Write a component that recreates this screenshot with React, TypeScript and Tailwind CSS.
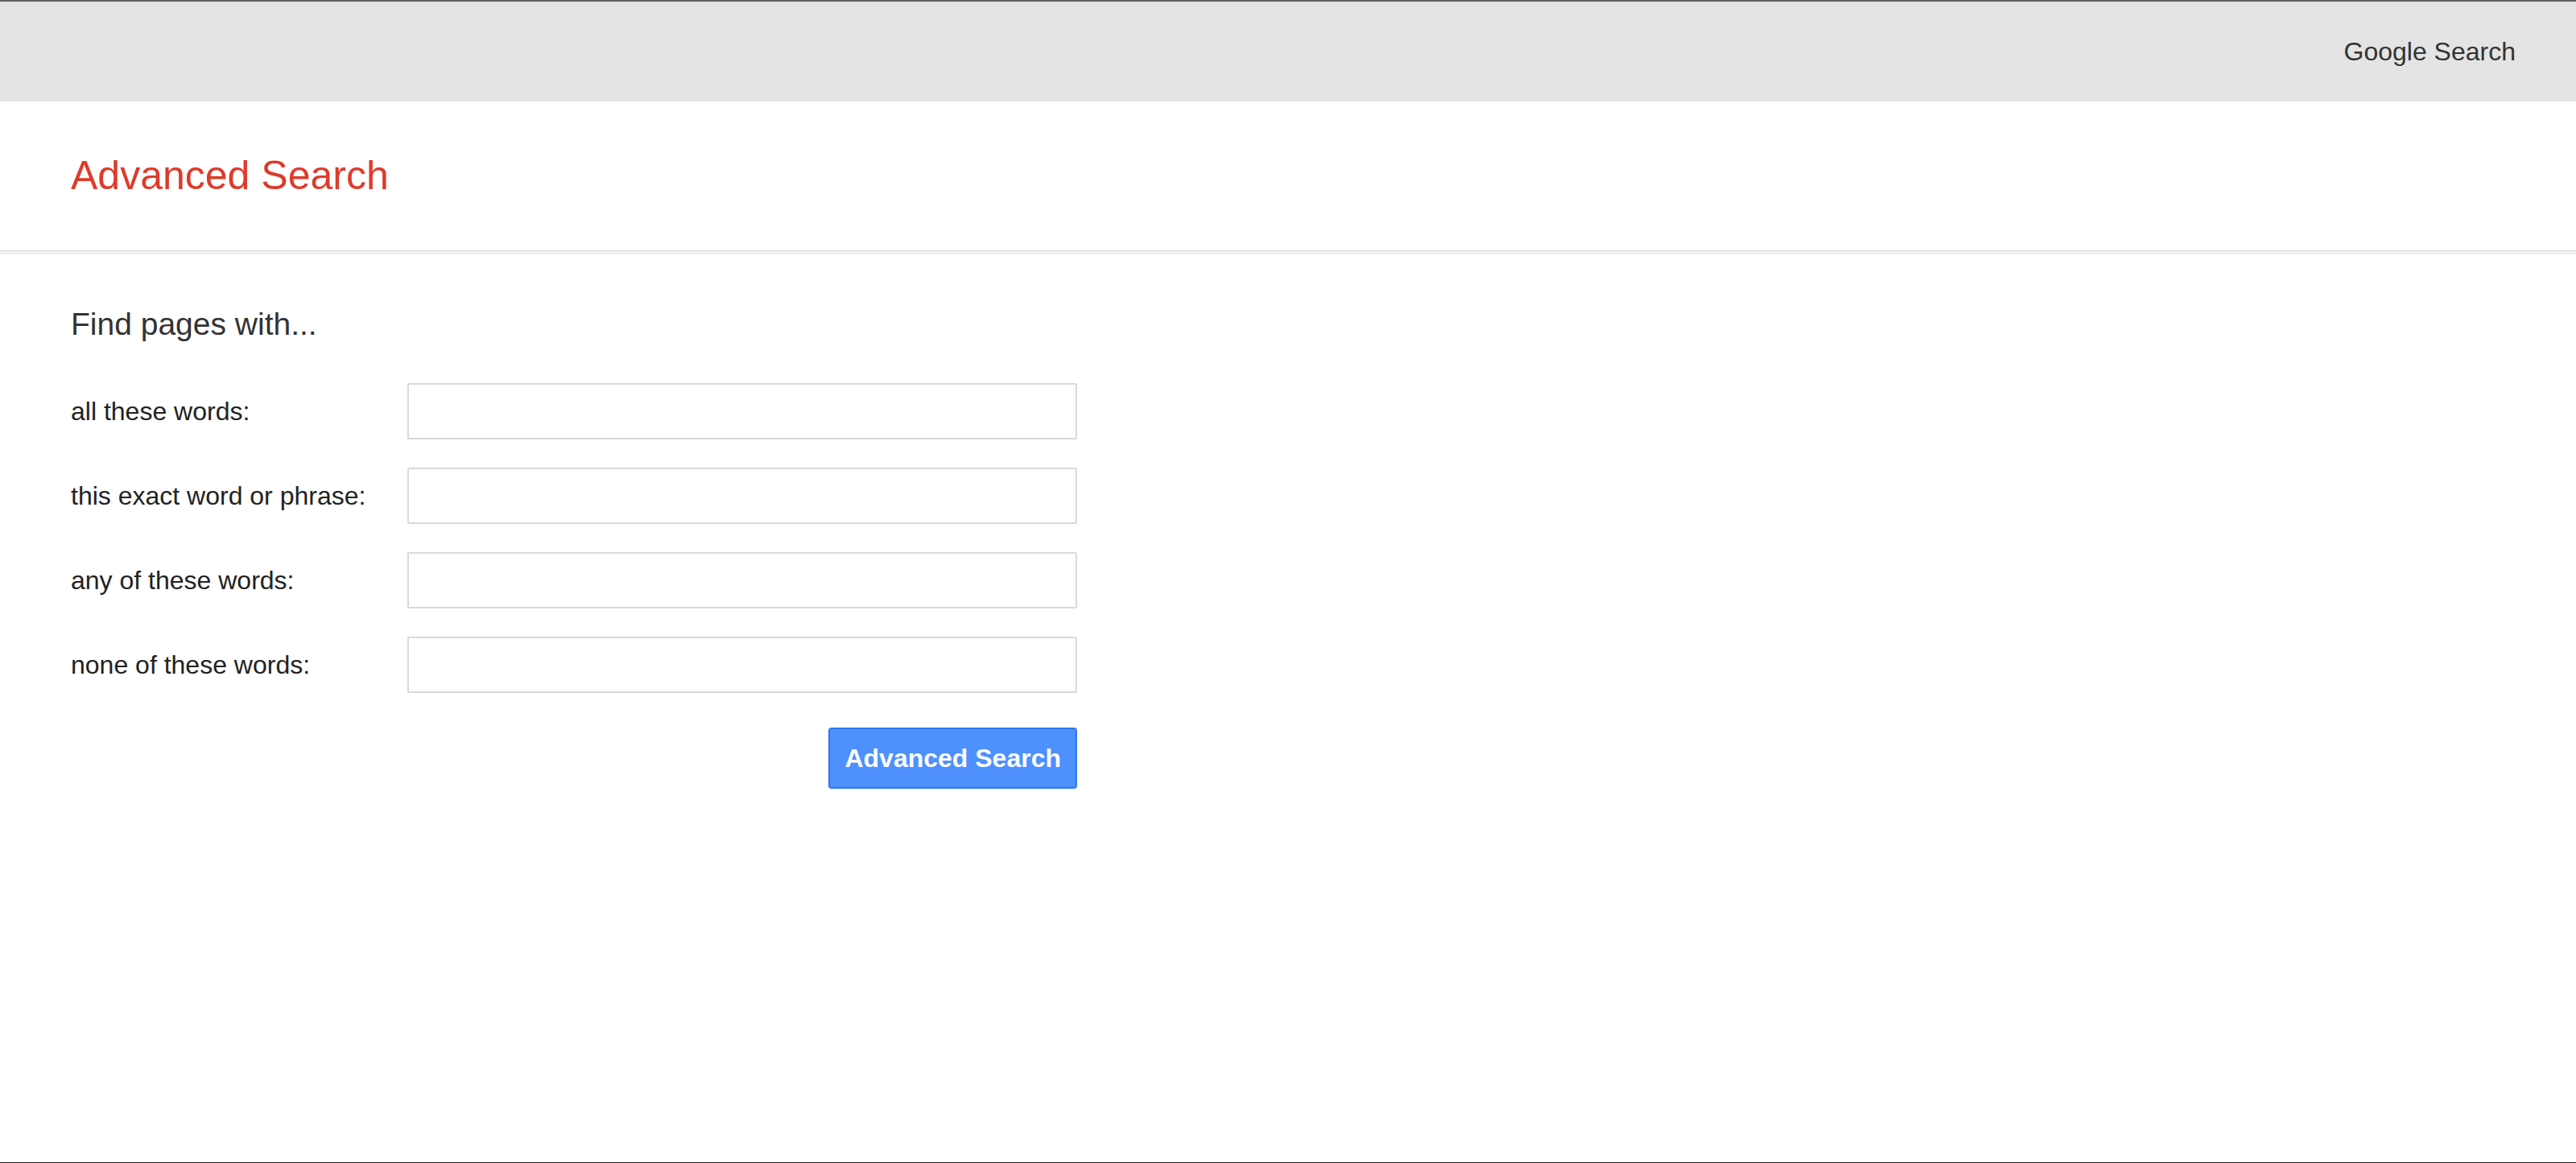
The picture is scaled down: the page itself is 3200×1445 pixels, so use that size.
const FIELDS = [
  'all these words:',
  'this exact word or phrase:',
  'any of these words:',
  'none of these words:',
];

export default function App() {
  return (
    <div className="flex h-[1445px] w-full flex-col bg-white font-['Liberation_Sans',Arial,sans-serif]">
      {/* top bar */}
      <header className="flex h-[126px] items-center justify-end border-t-2 border-[#5f5f63] bg-[#e4e4e4] pr-[75px]">
        <span className="text-[32px] text-[#333]">Google Search</span>
      </header>

      {/* title */}
      <div className="flex h-[185px] items-center pl-[88px]">
        <h1 className="text-[50px] leading-normal text-[#dd3b2b]">Advanced Search</h1>
      </div>
      <div className="h-[2px] bg-[#e5e5e5]" />
      <div className="h-px bg-white" />
      <div className="h-[2px] bg-[#ebebeb]" />

      {/* form */}
      <div className="pl-[88px] pt-[58px]">
        <h2 className="text-[39px] leading-normal text-[#333]">Find pages with...</h2>
        <div className="mt-[43px] flex w-[1250px] flex-col gap-[35px]">
          {FIELDS.map((label) => (
            <div key={label} className="flex items-center">
              <label className="w-[418px] text-[32px] text-[#222]">{label}</label>
              <input
                type="text"
                className="h-[70px] w-[832px] rounded-[2px] border-2 border-[#d9d9d9] bg-white px-3 text-[32px] outline-none"
              />
            </div>
          ))}
        </div>
        <div className="mt-[43px] flex w-[1250px] justify-end">
          <button className="h-[76px] rounded-[4px] border-2 border-[#3079ed] bg-[#4d90fe] px-[18px] text-[32px] font-bold text-white">
            Advanced Search
          </button>
        </div>
      </div>

      <div className="mt-auto h-px bg-[#1f1f1f]" />
    </div>
  );
}
